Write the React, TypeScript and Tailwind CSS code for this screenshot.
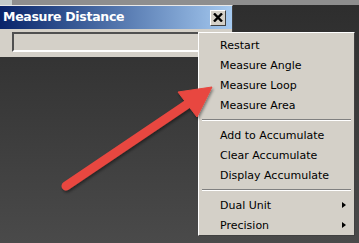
const items: (string | null)[] = [
  "Restart",
  "Measure Angle",
  "Measure Loop",
  "Measure Area",
  null,
  "Add to Accumulate",
  "Clear Accumulate",
  "Display Accumulate",
  null,
  "Dual Unit>",
  "Precision>",
]

const MenuRow = ({ label }: { label: string }) => {
  const sub = label.endsWith(">")
  const text = sub ? label.slice(0, -1) : label
  return (
    <div className="h-[20px] flex items-center justify-between pl-[21px] pr-[8px] text-[11px] text-black leading-none">
      <span>{text}</span>
      {sub && (
        <span className="w-0 h-0 border-y-[3.5px] border-y-transparent border-l-[4px] border-l-black" />
      )}
    </div>
  )
}

const Separator = () => (
  <div className="h-[10px] flex flex-col justify-center px-[3px]">
    <div className="h-px bg-[#808080]" />
    <div className="h-px bg-white" />
  </div>
)

const App = () => {
  return (
    <div className="relative w-[359px] h-[243px] overflow-hidden bg-gradient-to-b from-[#2d2d2d] to-[#4a4a4a] font-['Tahoma','DejaVu_Sans',sans-serif]">
      {/* strip of desktop above the window */}
      <div className="h-[5px] flex bg-[#8e8e8e]">
        <div className="w-[12px] bg-[#c4cccc]" />
      </div>

      {/* measure distance window */}
      <div className="w-[233px] border-t border-t-[#e8e8e8] border-r border-r-[#404040] bg-[#d4d0c8]">
        <div className="h-[23px] flex items-center justify-between pl-[3px] pr-[6px] bg-gradient-to-r from-[#0a246a] to-[#a6caf0]">
          <span className="text-white font-bold text-[12.5px] tracking-[-0.3px]">Measure Distance</span>
          <div className="w-[16px] h-[16px] flex items-center justify-center bg-[#d4d0c8] border border-t-white border-l-white border-r-[#404040] border-b-[#404040]">
            <svg width="10" height="9" viewBox="0 0 10 9">
              <path d="M1 0.5 L9 8.5 M9 0.5 L1 8.5" stroke="black" strokeWidth="2.4" />
            </svg>
          </div>
        </div>
        <div className="h-[28px] pt-[3px] pl-[12px]">
          <div className="w-[200px] h-[20px] border-2 border-t-[#505050] border-l-[#505050] border-r-[#d4d0c8] border-b-white" />
        </div>
      </div>

      {/* context menu */}
      <div className="absolute left-[198px] top-[32px] w-[157px] h-[204px] pt-[2px] bg-[#d4d0c8] border border-t-white border-l-white border-r-[#404040] border-b-[#404040]">
        {items.map((it, i) => (it ? <MenuRow key={i} label={it} /> : <Separator key={i} />))}
      </div>

      {/* red annotation arrow */}
      <svg className="absolute left-0 top-0" width="359" height="243" viewBox="0 0 359 243">
        <defs>
          <filter id="sh" x="-20%" y="-20%" width="140%" height="140%">
            <feDropShadow dx="1" dy="2" stdDeviation="1.5" floodColor="#000" floodOpacity="0.45" />
          </filter>
        </defs>
        <g filter="url(#sh)" fill="#e8473f" stroke="#e8473f">
          <line x1="66" y1="186" x2="192" y2="101" strokeWidth="9" strokeLinecap="round" />
          <polygon points="212,87 178,92 197,117" strokeWidth="1" strokeLinejoin="round" />
        </g>
      </svg>
    </div>
  )
}

export default App
